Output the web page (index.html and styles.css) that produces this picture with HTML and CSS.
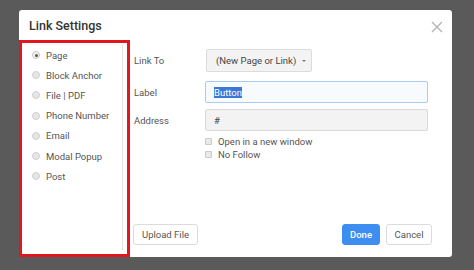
FILE: index.html
```html
<!DOCTYPE html>
<html>
<head>
<meta charset="utf-8">
<link rel="stylesheet" href="styles.css">
</head>
<body>
<div class="dialog">
  <div class="header">
    <div class="title">Link Settings</div>
    <svg class="close" width="12" height="12" viewBox="0 0 12 12"><path d="M1 1L11 11M11 1L1 11" stroke="#b3b3b3" stroke-width="1.4" fill="none"/></svg>
  </div>
  <div class="main">
    <div class="sidebar">
      <ul class="types">
        <li class="type"><span class="radio checked"></span>Page</li>
        <li class="type"><span class="radio"></span>Block Anchor</li>
        <li class="type"><span class="radio"></span>File | PDF</li>
        <li class="type"><span class="radio"></span>Phone Number</li>
        <li class="type"><span class="radio"></span>Email</li>
        <li class="type"><span class="radio"></span>Modal Popup</li>
        <li class="type"><span class="radio"></span>Post</li>
      </ul>
    </div>
    <div class="content">
      <div class="form">
        <div class="row row-select">
          <div class="label">Link To</div>
          <div class="select">(New Page or Link)<span class="caret"></span></div>
        </div>
        <div class="row row-label">
          <div class="label">Label</div>
          <div class="input focused"><span class="sel">Button</span></div>
        </div>
        <div class="row row-address">
          <div class="label">Address</div>
          <div class="input">#</div>
        </div>
        <div class="checks">
          <div class="check"><span class="box"></span>Open in a new window</div>
          <div class="check"><span class="box"></span>No Follow</div>
        </div>
      </div>
      <div class="footer">
        <div class="btn upload">Upload File</div>
        <div class="actions">
          <div class="btn primary">Done</div>
          <div class="btn cancel">Cancel</div>
        </div>
      </div>
    </div>
  </div>
</div>
</body>
</html>
```

FILE: styles.css
```css
html, body {
  margin: 0;
  padding: 0;
}
body {
  background: #5a5a5a;
  width: 474px;
  height: 270px;
  overflow: hidden;
  font-family: Roboto, "Liberation Sans", sans-serif;
  font-size: 9.5px;
  color: #555;
  padding: 10px 0 0 19px;
  box-sizing: border-box;
}
.dialog {
  width: 433px;
  height: 247px;
  background: #fff;
  border-radius: 3px;
  display: flex;
  flex-direction: column;
}
.header {
  height: 30px;
  flex: none;
  display: flex;
  align-items: center;
  justify-content: space-between;
  padding: 0 9px 0 10px;
}
.title {
  font-size: 12.5px;
  font-weight: 500;
  color: #333;
}
.close {
  margin-top: 4px;
}
.main {
  flex: 1;
  display: flex;
  min-height: 0;
}
.sidebar {
  width: 111px;
  flex: none;
  border: 3px solid #e3151e;
  box-sizing: border-box;
  display: flex;
  flex-direction: column;
}
.types {
  list-style: none;
  margin: 2px 4px 4px 0;
  padding: 0;
  flex: 1;
  border-right: 1px solid #e2e2e2;
}
.type {
  height: 20.2px;
  display: flex;
  align-items: center;
  padding-left: 10px;
  color: #555;
}
.radio {
  width: 6px;
  height: 6px;
  border-radius: 50%;
  border: 1px solid #cfcfcf;
  background: #e6e6e6;
  margin-right: 6px;
  flex: none;
  position: relative;
}
.radio.checked {
  background: #f2f2f2;
  border-color: #c4c4c4;
}
.radio.checked::after {
  content: "";
  position: absolute;
  left: 1.5px;
  top: 1.5px;
  width: 3px;
  height: 3px;
  border-radius: 50%;
  background: #555;
}
.content {
  flex: 1;
  display: flex;
  flex-direction: column;
  justify-content: space-between;
  padding: 9px 20px 12px 3px;
}
.form {
  display: flex;
  flex-direction: column;
  margin-right: 4px;
}
.row {
  display: flex;
  align-items: center;
}
.label {
  width: 71px;
  flex: none;
  padding-left: 1px;
  color: #555;
}
.select {
  width: 106px;
  height: 23px;
  box-sizing: border-box;
  background: #f3f3f3;
  border: 1px solid #dcdcdc;
  border-radius: 2px;
  display: flex;
  align-items: center;
  padding-left: 9px;
  margin-left: 1px;
  color: #444;
}
.caret {
  width: 0;
  height: 0;
  border-left: 2.5px solid transparent;
  border-right: 2.5px solid transparent;
  border-top: 2.5px solid #777;
  margin-left: 6px;
}
.row-label {
  margin-top: 9px;
}
.row-address {
  margin-top: 6px;
}
.input {
  flex: 1;
  height: 22px;
  box-sizing: border-box;
  border: 1px solid #dadada;
  background: #f3f3f3;
  border-radius: 2px;
  display: flex;
  align-items: center;
  padding-left: 8px;
  color: #444;
}
.input.focused {
  background: #f8fbfe;
  border-color: #a9cbef;
}
.sel {
  background: #3a78d8;
  color: #fff;
  line-height: 11px;
}
.checks {
  margin-top: 4px;
  padding-left: 72px;
}
.check {
  height: 12.7px;
  display: flex;
  align-items: center;
  color: #555;
}
.box {
  width: 7px;
  height: 7px;
  box-sizing: border-box;
  border: 1px solid #c9c9c9;
  background: #e9e9e9;
  border-radius: 1px;
  margin-right: 6px;
}
.footer {
  display: flex;
  justify-content: space-between;
  align-items: flex-end;
}
.actions {
  display: flex;
  gap: 6px;
}
.btn {
  height: 21px;
  box-sizing: border-box;
  border: 1px solid #dcdcdc;
  border-radius: 3px;
  background: #fff;
  display: flex;
  align-items: center;
  justify-content: center;
  color: #555;
}
.btn.upload {
  width: 65px;
}
.btn.primary {
  width: 38px;
  background: #3d8ef0;
  border-color: #3d8ef0;
  color: #fff;
  font-weight: 500;
}
.btn.cancel {
  width: 46px;
}
```
